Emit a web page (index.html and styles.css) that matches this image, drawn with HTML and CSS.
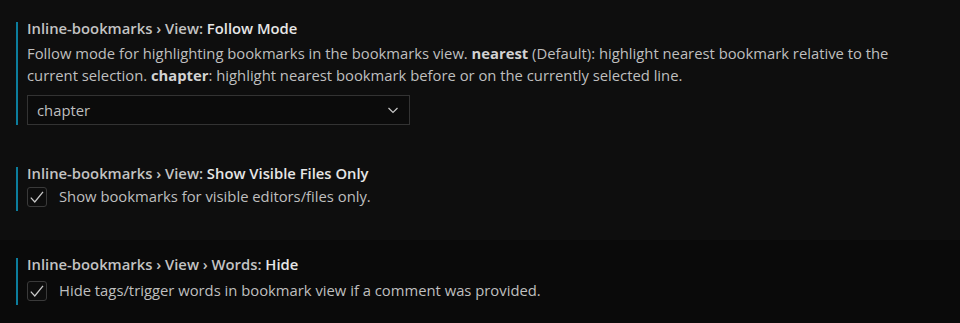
FILE: index.html
```html
<!DOCTYPE html>
<html>
<head>
<meta charset="utf-8">
<link rel="stylesheet" href="styles.css">
</head>
<body>
<div class="upper">
  <div class="setting s1">
    <div class="item">
      <div class="title"><span class="cat">Inline-bookmarks › View: </span><span class="label">Follow Mode</span></div>
      <div class="desc">Follow mode for highlighting bookmarks in the bookmarks view. <b>nearest</b> (Default): highlight nearest bookmark relative to the<br>current selection. <b>chapter</b>: highlight nearest bookmark before or on the currently selected line.</div>
      <div class="select">
        <span>chapter</span>
        <svg class="chev" width="16" height="16" viewBox="0 0 16 16"><path d="M3.5 6 L8 10.5 L12.5 6" fill="none" stroke="#c8c8c8" stroke-width="1.2"/></svg>
      </div>
    </div>
  </div>
  <div class="setting s2">
    <div class="item">
      <div class="title"><span class="cat">Inline-bookmarks › View: </span><span class="label">Show Visible Files Only</span></div>
      <div class="check-row">
        <span class="box"><svg width="20" height="20" viewBox="0 0 20 20"><path d="M3.8 10.6 L7.8 15 L16 4.8" fill="none" stroke="#c8c8c8" stroke-width="1.3"/></svg></span>
        <span class="ctext">Show bookmarks for visible editors/files only.</span>
      </div>
    </div>
  </div>
</div>
<div class="setting s3">
  <div class="item">
    <div class="title"><span class="cat">Inline-bookmarks › View › Words: </span><span class="label">Hide</span></div>
    <div class="check-row">
      <span class="box"><svg width="20" height="20" viewBox="0 0 20 20"><path d="M3.8 10.6 L7.8 15 L16 4.8" fill="none" stroke="#c8c8c8" stroke-width="1.3"/></svg></span>
      <span class="ctext">Hide tags/trigger words in bookmark view if a comment was provided.</span>
    </div>
  </div>
</div>
</body>
</html>
```
FILE: styles.css
```css
html, body {
  margin: 0;
  padding: 0;
  background: #0a0a0a;
  font-family: "Open Sans", "Noto Sans", sans-serif;
  font-size: 14.8px;
  color: #c0c0c0;
}
.upper {
  background: #0e0e0e;
}
.setting {
  padding-left: 16px;
}
.s1 { padding-top: 22px; padding-bottom: 22px; }
.s2 { padding-top: 18px; padding-bottom: 29px; }
.s3 { padding-top: 18px; padding-bottom: 20px; }
.item {
  border-left: 2px solid #0c7d9d;
  padding-left: 9px;
}
.title {
  line-height: 13px;
  font-weight: 600;
  white-space: nowrap;
}
.s2 .title,
.s3 .title {
  line-height: 12px;
}
.cat {
  color: #c3c3c3;
}
.label {
  color: #e6e6e6;
}
.desc {
  margin-top: 8px;
  line-height: 21.5px;
  color: #bfbfbf;
  white-space: nowrap;
}
.desc b {
  font-weight: 700;
  color: #d2d2d2;
}
.select {
  margin-top: 9px;
  width: 364px;
  height: 28px;
  border: 1px solid #333333;
  background: #0b0b0b;
  display: flex;
  align-items: center;
  justify-content: space-between;
  padding: 0 8px 0 9px;
  color: #bfbfbf;
  margin-bottom: 2px;
}
.chev {
  display: block;
}
.check-row {
  display: flex;
  align-items: center;
  gap: 12px;
  margin-top: 7px;
  padding-bottom: 4px;
}
.s3 .check-row {
  margin-top: 10px;
}
.box {
  width: 18px;
  height: 18px;
  border: 1px solid #3a3a3a;
  border-radius: 3px;
  background: #0d0d0d;
  display: flex;
  align-items: center;
  justify-content: center;
  overflow: hidden;
}
.box svg {
  display: block;
  flex: none;
}
.ctext {
  line-height: 21px;
  color: #bfbfbf;
}
```
